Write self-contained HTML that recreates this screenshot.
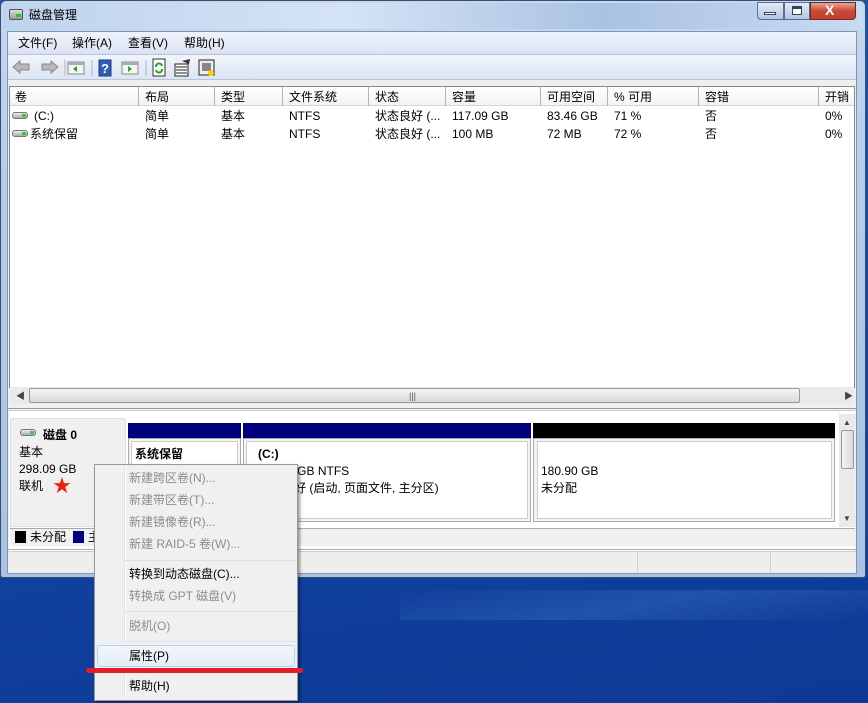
<!DOCTYPE html>
<html><head><meta charset="utf-8"><style>
*{margin:0;padding:0;box-sizing:border-box}
body{width:868px;height:703px;overflow:hidden;position:relative;font-family:"Liberation Sans","Noto Sans CJK SC",sans-serif;font-size:12px;color:#000;background:linear-gradient(170deg,#1d5bb8 0%,#1245a3 50%,#0d3a95 100%)}
.a{position:absolute}
.t{position:absolute;white-space:nowrap;line-height:14px}
</style></head><body>
<div class="a" style="left:400px;top:590px;width:468px;height:30px;background:linear-gradient(170deg,rgba(120,170,240,0) 0%,rgba(120,180,250,.18) 50%,rgba(120,170,240,0) 100%)"></div>
<div class="a" style="left:0;top:0;width:866px;height:578px;border:1px solid #3a4d6b;border-radius:6px 6px 3px 3px;background:linear-gradient(180deg,#c5d8ef 0%,#b6cde9 30%,#a9c3e5 100%)"></div>
<div class="a" style="left:3px;top:3px;width:860px;height:26px;background:linear-gradient(90deg,#bed3ee,#d5e3f4 40%,#a9c2e3 70%,#c9dbf1)"></div>
<div class="a" style="left:9px;top:9px;width:14px;height:11px;border:1px solid #555;background:linear-gradient(#ddd,#999);border-radius:2px"></div>
<div class="a" style="left:16px;top:14px;width:5px;height:3px;background:#2c2"></div>
<div class="t" style="left:29px;top:8px;font-size:12px">磁盘管理</div>
<div class="a" style="left:757px;top:2px;width:27px;height:18px;border:1px solid #5b6e8d;border-radius:0 0 0 4px;background:linear-gradient(#e2ebf6,#b2c6e2)"></div>
<div class="a" style="left:764px;top:12px;width:12px;height:3px;background:#fff;border:1px solid #34425a"></div>
<div class="a" style="left:784px;top:2px;width:26px;height:18px;border:1px solid #5b6e8d;background:linear-gradient(#e2ebf6,#b2c6e2)"></div>
<div class="a" style="left:792px;top:6px;width:10px;height:9px;border:1px solid #34425a;border-top-width:3px;background:#fff"></div>
<div class="a" style="left:810px;top:2px;width:46px;height:18px;border:1px solid #6b2b22;border-radius:0 0 4px 0;background:linear-gradient(#e8a493,#c74a34 50%,#c4402a)"></div>
<div class="t" style="left:825px;top:3px;color:#fff;font-weight:bold;font-size:14px">X</div>
<div class="a" style="left:7px;top:31px;width:850px;height:543px;border:1px solid #8195b2;background:#f0f0f0"></div>
<div class="a" style="left:8px;top:32px;width:848px;height:22px;background:linear-gradient(#eef2fb,#dbe3f3)"></div>
<div class="t" style="left:18px;top:36px">文件(F)</div>
<div class="t" style="left:72px;top:36px">操作(A)</div>
<div class="t" style="left:128px;top:36px">查看(V)</div>
<div class="t" style="left:184px;top:36px">帮助(H)</div>
<div class="a" style="left:8px;top:54px;width:848px;height:26px;background:linear-gradient(#f1f4fb,#dde5f3);border-top:1px solid #b9c5da;border-bottom:1px solid #b9c5da"></div>
<svg class="a" style="left:10px;top:58px" width="230" height="20">
<path d="M3 9 L10 3 V6 H19 V12 H10 V15 Z" fill="#b8b8b8" stroke="#888"/>
<path d="M48 9 L41 3 V6 H32 V12 H41 V15 Z" fill="#b8b8b8" stroke="#888"/>
<line x1="55" y1="2" x2="55" y2="18" stroke="#a9b4c6"/>
<rect x="58" y="4" width="16" height="12" fill="#f6f6f6" stroke="#888"/><rect x="58" y="4" width="16" height="3" fill="#aab"/><path d="M67 8 L63 11 L67 14 Z" fill="#2a2"/>
<line x1="82" y1="2" x2="82" y2="18" stroke="#a9b4c6"/>
<rect x="89" y="2" width="12" height="16" fill="#2d5fb8" stroke="#1a3a80"/><text x="91" y="15" fill="#fff" font-size="13" font-family="Liberation Sans" font-weight="bold">?</text>
<rect x="112" y="4" width="16" height="12" fill="#f6f6f6" stroke="#888"/><rect x="112" y="4" width="16" height="3" fill="#aab"/><path d="M118 8 L122 11 L118 14 Z" fill="#2a2"/>
<line x1="136" y1="2" x2="136" y2="18" stroke="#a9b4c6"/>
<rect x="143" y="1" width="12" height="17" fill="#fff" stroke="#333"/><path d="M146 9 a3 3 0 0 1 6 -1 M152 11 a3 3 0 0 1 -6 1" stroke="#1a1" stroke-width="2" fill="none"/>
<rect x="165" y="6" width="13" height="12" fill="#fff" stroke="#222"/><path d="M166 9h11M166 12h11M166 15h11" stroke="#222"/><path d="M172 3 L180 1 L179 6 Z" fill="#333"/>
<rect x="189" y="2" width="15" height="15" fill="#eee" stroke="#222"/><rect x="192" y="5" width="9" height="8" fill="#888"/><circle cx="201" cy="15" r="3" fill="#fc0"/>
</svg>
<div class="a" style="left:9px;top:86px;width:846px;height:302px;background:#fff;border:1px solid #828790"></div>
<div class="a" style="left:10px;top:87px;width:844px;height:19px;background:linear-gradient(#fff,#f3f3f3);border-bottom:1px solid #d5d5d5"></div>
<div class="a" style="left:138px;top:87px;width:1px;height:19px;background:#b3b3b3"></div>
<div class="a" style="left:214px;top:87px;width:1px;height:19px;background:#b3b3b3"></div>
<div class="a" style="left:282px;top:87px;width:1px;height:19px;background:#b3b3b3"></div>
<div class="a" style="left:368px;top:87px;width:1px;height:19px;background:#b3b3b3"></div>
<div class="a" style="left:445px;top:87px;width:1px;height:19px;background:#b3b3b3"></div>
<div class="a" style="left:540px;top:87px;width:1px;height:19px;background:#b3b3b3"></div>
<div class="a" style="left:607px;top:87px;width:1px;height:19px;background:#b3b3b3"></div>
<div class="a" style="left:698px;top:87px;width:1px;height:19px;background:#b3b3b3"></div>
<div class="a" style="left:818px;top:87px;width:1px;height:19px;background:#b3b3b3"></div>
<div class="t" style="left:15px;top:90px">卷</div>
<div class="t" style="left:145px;top:90px">布局</div>
<div class="t" style="left:221px;top:90px">类型</div>
<div class="t" style="left:289px;top:90px">文件系统</div>
<div class="t" style="left:375px;top:90px">状态</div>
<div class="t" style="left:452px;top:90px">容量</div>
<div class="t" style="left:547px;top:90px">可用空间</div>
<div class="t" style="left:614px;top:90px">% 可用</div>
<div class="t" style="left:705px;top:90px">容错</div>
<div class="t" style="left:825px;top:90px">开销</div>
<div class="a" style="left:12px;top:112px;width:16px;height:7px;border:1px solid #777;border-radius:3px;background:linear-gradient(#eee,#aaa)"></div>
<div class="a" style="left:22px;top:114px;width:4px;height:3px;background:#3c3"></div>
<div class="t" style="left:34px;top:109px">(C:)</div>
<div class="t" style="left:145px;top:109px">简单</div><div class="t" style="left:221px;top:109px">基本</div><div class="t" style="left:289px;top:109px">NTFS</div><div class="t" style="left:375px;top:109px">状态良好 (...</div><div class="t" style="left:452px;top:109px">117.09 GB</div><div class="t" style="left:547px;top:109px">83.46 GB</div><div class="t" style="left:614px;top:109px">71 %</div><div class="t" style="left:705px;top:109px">否</div><div class="t" style="left:825px;top:109px">0%</div>
<div class="a" style="left:12px;top:130px;width:16px;height:7px;border:1px solid #777;border-radius:3px;background:linear-gradient(#eee,#aaa)"></div>
<div class="a" style="left:22px;top:132px;width:4px;height:3px;background:#3c3"></div>
<div class="t" style="left:30px;top:127px">系统保留</div>
<div class="t" style="left:145px;top:127px">简单</div><div class="t" style="left:221px;top:127px">基本</div><div class="t" style="left:289px;top:127px">NTFS</div><div class="t" style="left:375px;top:127px">状态良好 (...</div><div class="t" style="left:452px;top:127px">100 MB</div><div class="t" style="left:547px;top:127px">72 MB</div><div class="t" style="left:614px;top:127px">72 %</div><div class="t" style="left:705px;top:127px">否</div><div class="t" style="left:825px;top:127px">0%</div>
<div class="a" style="left:10px;top:387px;width:844px;height:17px;background:#eaeaea"></div>
<div class="a" style="left:29px;top:388px;width:771px;height:15px;border:1px solid #999;border-radius:2px;background:linear-gradient(#f5f5f5,#d8d8d8)"></div>
<div class="t" style="left:409px;top:389px;font-size:9px;color:#555">|||</div>
<div class="t" style="left:16px;top:389px;font-size:9px;color:#444">◀</div>
<div class="t" style="left:844px;top:389px;font-size:9px;color:#444">▶</div>
<div class="a" style="left:8px;top:405px;width:848px;height:4px;background:#f0f0f0;border-bottom:1px solid #999"></div>
<div class="a" style="left:9px;top:410px;width:846px;height:145px;background:#fff;border-top:1px solid #ccc"></div>
<div class="a" style="left:10px;top:418px;width:116px;height:109px;background:#f0f0f0;border:1px solid #e0e0e0"></div>
<div class="a" style="left:20px;top:429px;width:16px;height:7px;border:1px solid #777;border-radius:3px;background:linear-gradient(#eee,#aaa)"></div>
<div class="a" style="left:30px;top:431px;width:4px;height:3px;background:#3c3"></div>
<div class="t" style="left:43px;top:428px;font-weight:bold">磁盘 0</div>
<div class="t" style="left:19px;top:445px">基本</div>
<div class="t" style="left:19px;top:462px">298.09 GB</div>
<div class="t" style="left:19px;top:479px">联机</div>
<div class="t" style="left:53px;top:476px;color:#e21;font-size:18px;line-height:20px">★</div>
<div class="a" style="left:128px;top:423px;width:113px;height:15px;background:#00007f"></div>
<div class="a" style="left:243px;top:423px;width:288px;height:15px;background:#00007f"></div>
<div class="a" style="left:533px;top:423px;width:302px;height:15px;background:#000"></div>
<div class="a" style="left:128px;top:438px;width:113px;height:84px;border:1px solid #aaa;background:#f4f4f4"></div>
<div class="a" style="left:131px;top:441px;width:107px;height:78px;background:#fff;border:1px solid #ccc"></div>
<div class="a" style="left:243px;top:438px;width:288px;height:84px;border:1px solid #aaa;background:#f4f4f4"></div>
<div class="a" style="left:246px;top:441px;width:282px;height:78px;background:#fff;border:1px solid #ccc"></div>
<div class="a" style="left:533px;top:438px;width:302px;height:84px;border:1px solid #aaa;background:#f4f4f4"></div>
<div class="a" style="left:537px;top:441px;width:295px;height:78px;background:#fff;border:1px solid #ccc"></div>
<div class="t" style="left:135px;top:447px;font-weight:bold">系统保留</div>
<div class="t" style="left:258px;top:447px;font-weight:bold">(C:)</div>
<div class="t" style="left:258px;top:464px">117.19 GB NTFS</div>
<div class="t" style="left:258px;top:481px">状态良好 (启动, 页面文件, 主分区)</div>
<div class="t" style="left:541px;top:464px">180.90 GB</div>
<div class="t" style="left:541px;top:481px">未分配</div>
<div class="a" style="left:839px;top:414px;width:16px;height:113px;background:#eaeaea"></div>
<div class="a" style="left:841px;top:430px;width:13px;height:39px;border:1px solid #999;border-radius:2px;background:linear-gradient(90deg,#f5f5f5,#d8d8d8)"></div>
<div class="t" style="left:843px;top:416px;font-size:8px;color:#444">▲</div>
<div class="t" style="left:843px;top:512px;font-size:8px;color:#444">▼</div>
<div class="a" style="left:10px;top:528px;width:845px;height:18px;background:#f0f0f0;border-top:1px solid #aaa"></div>
<div class="a" style="left:15px;top:531px;width:11px;height:12px;background:#000"></div>
<div class="t" style="left:30px;top:530px">未分配</div>
<div class="a" style="left:73px;top:531px;width:11px;height:12px;background:#00007f"></div>
<div class="t" style="left:88px;top:530px">主分区</div>
<div class="a" style="left:8px;top:549px;width:848px;height:1px;background:#aaa"></div>
<div class="a" style="left:8px;top:551px;width:848px;height:22px;background:#f0eeec;border-top:1px solid #ccc"></div>
<div class="a" style="left:637px;top:552px;width:1px;height:20px;background:#d0d0d0"></div>
<div class="a" style="left:770px;top:552px;width:1px;height:20px;background:#d0d0d0"></div>
<div class="a" style="left:94px;top:464px;width:204px;height:237px;background:#f0f0f0;border:1px solid #979797;box-shadow:2px 2px 3px rgba(0,0,0,.4)"></div>
<div class="a" style="left:124px;top:466px;width:1px;height:233px;background:#e2e3e3"></div>
<div class="a" style="left:125px;top:466px;width:1px;height:233px;background:#fff"></div>
<div class="a" style="left:125px;top:560px;width:171px;height:1px;background:#e0e0e0"></div>
<div class="a" style="left:125px;top:611px;width:171px;height:1px;background:#e0e0e0"></div>
<div class="a" style="left:125px;top:641px;width:171px;height:1px;background:#e0e0e0"></div>
<div class="a" style="left:97px;top:645px;width:198px;height:22px;border:1px solid #a8d8f8;border-radius:3px;background:linear-gradient(#f2f6fb,#e3ecf7)"></div>
<div class="t" style="left:129px;top:471px;color:#8d8d8d">新建跨区卷(N)...</div>
<div class="t" style="left:129px;top:493px;color:#8d8d8d">新建带区卷(T)...</div>
<div class="t" style="left:129px;top:515px;color:#8d8d8d">新建镜像卷(R)...</div>
<div class="t" style="left:129px;top:537px;color:#8d8d8d">新建 RAID-5 卷(W)...</div>
<div class="t" style="left:129px;top:567px">转换到动态磁盘(C)...</div>
<div class="t" style="left:129px;top:589px;color:#8d8d8d">转换成 GPT 磁盘(V)</div>
<div class="t" style="left:129px;top:619px;color:#8d8d8d">脱机(O)</div>
<div class="t" style="left:129px;top:649px">属性(P)</div>
<div class="t" style="left:129px;top:679px">帮助(H)</div>
<div class="a" style="left:86px;top:668px;width:217px;height:5px;border-radius:3px;background:#e51c2a"></div>
</body></html>
